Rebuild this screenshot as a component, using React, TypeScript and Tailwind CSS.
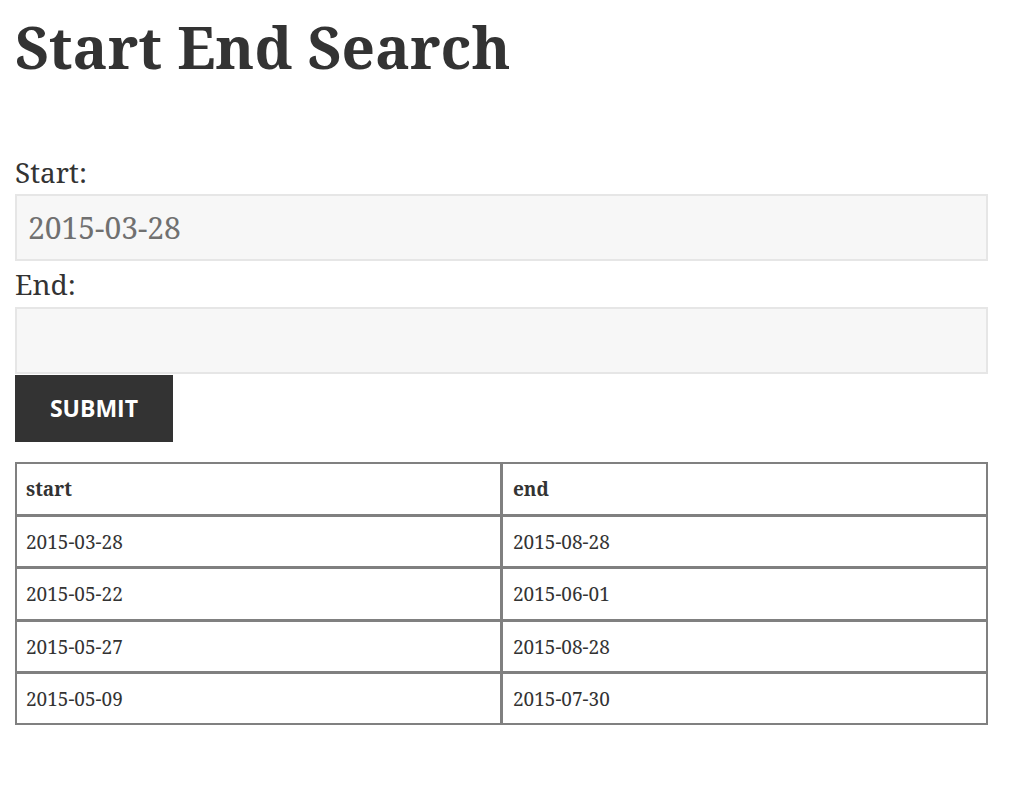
const rows = [
  ["2015-03-28", "2015-08-28"],
  ["2015-05-22", "2015-06-01"],
  ["2015-05-27", "2015-08-28"],
  ["2015-05-09", "2015-07-30"],
];

const serif = "font-['Noto_Serif','DejaVu_Serif',serif]";

const App = () => {
  return (
    <div className={`min-h-[792px] bg-white px-[15px] text-[#333] ${serif}`}>
      {/* Title */}
      <h1 className="pt-[10px] pb-[2px] text-[58.5px] font-bold leading-[72px]">
        Start End Search
      </h1>

      <form className="mt-[68px] w-[973px]">
        {/* Start */}
        <label className="mb-[2px] block text-[28px] leading-[40px]">
          Start:
        </label>
        <input
          type="text"
          defaultValue="2015-03-28"
          className="block h-[67px] w-full border-2 border-[#e6e6e6] bg-[#f7f7f7] px-[11px] text-[30px] text-[#707070] outline-none"
        />

        {/* End */}
        <label className="mt-[3px] mb-[3px] block text-[28px] leading-[40px]">
          End:
        </label>
        <input
          type="text"
          className="block h-[67px] w-full border-2 border-[#e6e6e6] bg-[#f7f7f7] px-[11px] text-[30px] text-[#707070] outline-none"
        />

        {/* Button */}
        <button
          type="button"
          className="mt-[1px] block h-[67px] w-[158px] bg-[#333] font-['Open_Sans',sans-serif] text-[23px] font-bold uppercase text-white"
        >
          Submit
        </button>
      </form>

      {/* Results */}
      <table className="mt-[20px] w-[973px] table-fixed border-separate border-spacing-0 text-[19px]">
        <thead>
          <tr>
            <th className="w-[488px] border-2 border-r-[3px] border-b-[3px] border-[#808080] px-[9px] text-left leading-[50px] font-bold">
              start
            </th>
            <th className="border-t-2 border-r-2 border-b-[3px] border-[#808080] px-[10px] text-left leading-[50px] font-bold">
              end
            </th>
          </tr>
        </thead>
        <tbody>
          {rows.map((r, i) => (
            <tr key={i}>
              <td
                className={`border-l-2 border-r-[3px] border-[#808080] px-[9px] pt-[1px] leading-[48.25px] ${
                  i === rows.length - 1 ? "border-b-2" : "border-b-[3px]"
                }`}
              >
                {r[0]}
              </td>
              <td
                className={`border-r-2 border-[#808080] px-[10px] pt-[1px] leading-[48.25px] ${
                  i === rows.length - 1 ? "border-b-2" : "border-b-[3px]"
                }`}
              >
                {r[1]}
              </td>
            </tr>
          ))}
        </tbody>
      </table>
    </div>
  );
};

export default App;
